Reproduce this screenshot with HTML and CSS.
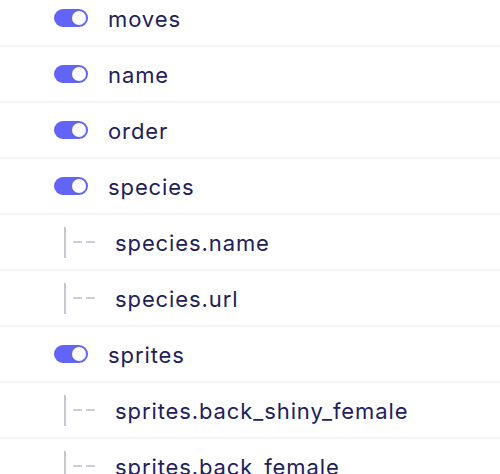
FILE: index.html
```html
<!DOCTYPE html>
<html>
<head>
<meta charset="utf-8">
<link rel="stylesheet" href="styles.css">
</head>
<body>
<ul class="fields">
  <li class="row"><span class="toggle"><span class="knob"></span></span><span class="label">moves</span></li>
  <li class="row"><span class="toggle"><span class="knob"></span></span><span class="label">name</span></li>
  <li class="row"><span class="toggle"><span class="knob"></span></span><span class="label">order</span></li>
  <li class="row"><span class="toggle"><span class="knob"></span></span><span class="label">species</span></li>
  <li class="row child"><span class="branch"><span class="bar"></span><span class="dash"></span><span class="dash"></span></span><span class="label">species.name</span></li>
  <li class="row child"><span class="branch"><span class="bar"></span><span class="dash"></span><span class="dash"></span></span><span class="label">species.url</span></li>
  <li class="row"><span class="toggle"><span class="knob"></span></span><span class="label">sprites</span></li>
  <li class="row child"><span class="branch"><span class="bar"></span><span class="dash"></span><span class="dash"></span></span><span class="label">sprites.back_shiny_female</span></li>
  <li class="row child"><span class="branch"><span class="bar"></span><span class="dash"></span><span class="dash"></span></span><span class="label">sprites.back_female</span></li>
</ul>
</body>
</html>
```
FILE: styles.css
```css
html, body {
  margin: 0;
  padding: 0;
  background: #ffffff;
  overflow: hidden;
}
body {
  font-family: Inter, "Noto Sans", sans-serif;
  color: #22205a;
}
.fields {
  list-style: none;
  margin: -9px 0 0 0;
  padding: 0;
}
.row {
  height: 54px;
  border-bottom: 2px solid #f4f4f6;
  display: flex;
  align-items: center;
  padding-left: 54px;
}
.toggle {
  width: 34px;
  height: 18px;
  border-radius: 9px;
  background: #6164f4;
  display: flex;
  align-items: center;
  justify-content: flex-end;
  padding-right: 2px;
  box-sizing: border-box;
  flex-shrink: 0;
}
.knob {
  width: 14px;
  height: 14px;
  border-radius: 50%;
  background: #ffffff;
}
.label {
  font-size: 22px;
  letter-spacing: 0.9px;
  margin-left: 20px;
  line-height: 1;
  padding-top: 2px;
  white-space: nowrap;
}
.child {
  padding-left: 64px;
}
.branch {
  display: flex;
  align-items: center;
  gap: 4px;
  width: 31px;
  flex-shrink: 0;
}
.bar {
  width: 2px;
  height: 31px;
  background: #c6c6cf;
  margin-right: 3px;
}
.dash {
  width: 9px;
  height: 2px;
  background: #cfcfd7;
}
.child .label {
  margin-left: 20px;
}
```
